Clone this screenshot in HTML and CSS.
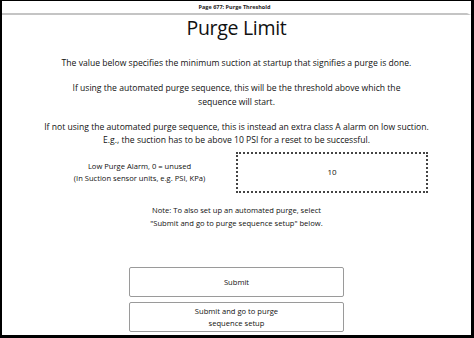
FILE: index.html
```html
<!DOCTYPE html>
<html>
<head>
<meta charset="utf-8">
<link rel="stylesheet" href="styles.css">
</head>
<body>
<div class="frame">
  <div class="topbar">Page 677: Purge Threshold</div>
  <h1 class="title">Purge Limit</h1>
  <div class="desc">
    <p>The value below specifies the minimum suction at startup that signifies a purge is done.</p>
    <p>If using the automated purge sequence, this will be the threshold above which the<br>sequence will start.</p>
    <p>If not using the automated purge sequence, this is instead an extra class A alarm on low suction.<br>E.g., the suction has to be above 10 PSI for a reset to be successful.</p>
  </div>
  <div class="field">
    <div class="label">Low Purge Alarm, 0 = unused<br>(In Suction sensor units, e.g. PSI, KPa)</div>
    <div class="input">10</div>
  </div>
  <p class="note">Note: To also set up an automated purge, select<br>"Submit and go to purge sequence setup" below.</p>
  <div class="buttons">
    <div class="btn">Submit</div>
    <div class="btn">Submit and go to purge<br>sequence setup</div>
  </div>
</div>
</body>
</html>
```
FILE: styles.css
```css
html, body {
  margin: 0;
  padding: 0;
  background: #000;
}
.frame {
  box-sizing: border-box;
  width: 474px;
  height: 338px;
  background: #000;
  padding: 1px 3px 3px 2px;
  display: flex;
  flex-direction: column;
  font-family: "Open Sans", "Noto Sans", sans-serif;
  color: #111;
  overflow: hidden;
}
.frame > * {
  background: #fff;
}
.topbar {
  height: 12px;
  line-height: 12px;
  font-size: 5.5px;
  font-weight: bold;
  text-align: center;
  border-bottom: 2px solid #c4c4c4;
  border-right: 4px solid #fff;
  color: #222;
}
.title {
  margin: 0;
  font-weight: normal;
  font-size: 19.5px;
  letter-spacing: -0.3px;
  line-height: 26px;
  padding-top: 0;
  text-align: center;
  color: #111;
}
.desc {
  padding-top: 16px;
  text-align: center;
  font-size: 8.6px;
  line-height: 13.5px;
}
.desc p {
  margin: 0 0 11.5px 0;
}
.desc p:last-child {
  margin-bottom: 0;
}
.field {
  display: flex;
  align-items: center;
  padding: 4px 43px 0 60px;
  font-size: 7.6px;
  line-height: 12px;
}
.label {
  flex: 0 0 155px;
  text-align: center;
}
.input {
  margin-left: 19px;
  flex: 1;
  height: 37px;
  border: 2px dotted #444;
  display: flex;
  align-items: center;
  justify-content: center;
  font-size: 8px;
}
.note {
  margin: 0;
  padding-top: 11px;
  text-align: center;
  font-size: 7.6px;
  line-height: 13px;
}
.buttons {
  flex: 1;
  display: flex;
  flex-direction: column;
  align-items: center;
  justify-content: flex-end;
  gap: 5px;
  padding-bottom: 3px;
}
.btn {
  box-sizing: border-box;
  width: 215px;
  height: 30px;
  border: 1px solid #9a9a9a;
  border-radius: 2px;
  display: flex;
  align-items: center;
  justify-content: center;
  text-align: center;
  font-size: 7.6px;
  line-height: 12px;
}
```
